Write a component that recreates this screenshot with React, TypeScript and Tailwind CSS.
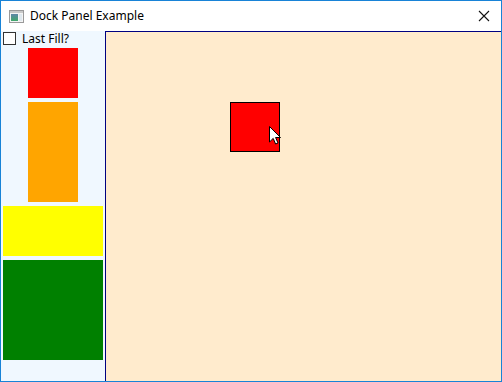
import React from "react";

export default function App() {
  return (
    <div
      className="w-[502px] h-[382px] flex flex-col bg-white border border-[#1883d7] border-t-0 overflow-hidden"
      style={{ fontFamily: '"Segoe UI", "Noto Sans", "Liberation Sans", sans-serif' }}
    >
      {/* title bar */}
      <div className="h-[31px] shrink-0 flex items-center bg-white border-t border-t-[#1883d7]">
        <svg width="16" height="14" viewBox="0 0 16 14" className="ml-[8px] mt-[1px]">
          <rect x="0.5" y="0.5" width="14" height="12" fill="#f4f4f4" stroke="#9a9a9a" />
          <rect x="1" y="1" width="13" height="2" fill="#c9c9c9" />
          <defs>
            <linearGradient id="g" x1="0" y1="0" x2="0" y2="1">
              <stop offset="0" stopColor="#5f86a8" />
              <stop offset="1" stopColor="#3fa86a" />
            </linearGradient>
          </defs>
          <rect x="2" y="4" width="7" height="7" fill="url(#g)" />
          <rect x="10" y="4" width="3" height="7" fill="#dfe8ee" />
        </svg>
        <span className="ml-[5px] text-[12px] text-black leading-none">Dock Panel Example</span>
        <div className="ml-auto mr-[10px] w-[14px] h-[14px] flex items-center justify-center">
          <svg width="12" height="12" viewBox="0 0 12 12">
            <path d="M1 1 L11 11 M11 1 L1 11" stroke="#111" strokeWidth="1.1" />
          </svg>
        </div>
      </div>

      {/* content */}
      <div className="flex flex-1 min-h-0">
        {/* left dock */}
        <div className="w-[104px] shrink-0 bg-[#f0f8ff] flex flex-col">
          <div className="h-[15px] flex items-center">
            <div className="ml-[2px] w-[13px] h-[13px] border border-[#333] bg-white" />
            <span className="ml-[6px] text-[12px] text-black leading-none">Last Fill?</span>
          </div>
          <div className="mt-[2px] mx-auto w-[50px] h-[50px] bg-[#ff0000]" />
          <div className="mt-[4px] mx-auto w-[50px] h-[100px] bg-[#ffa500]" />
          <div className="mt-[4px] mx-[2px] h-[50px] bg-[#ffff00]" />
          <div className="mt-[4px] mx-[2px] h-[100px] bg-[#008000]" />
        </div>

        {/* canvas */}
        <div className="relative flex-1 bg-[#ffebcd] border-l border-t border-[#000080]">
          <div className="absolute left-[124px] top-[70px] w-[50px] h-[50px] bg-[#ff0000] border border-black" />
          <svg
            className="absolute left-[163px] top-[94px]"
            width="13"
            height="20"
            viewBox="0 0 13 20"
          >
            <path
              d="M0.5 0.5 L0.5 16 L4.2 12.4 L6.6 18 L9 17 L6.6 11.5 L11.5 11.5 Z"
              fill="#fff"
              stroke="#000"
              strokeWidth="1"
              strokeLinejoin="miter"
            />
          </svg>
        </div>
      </div>
    </div>
  );
}
